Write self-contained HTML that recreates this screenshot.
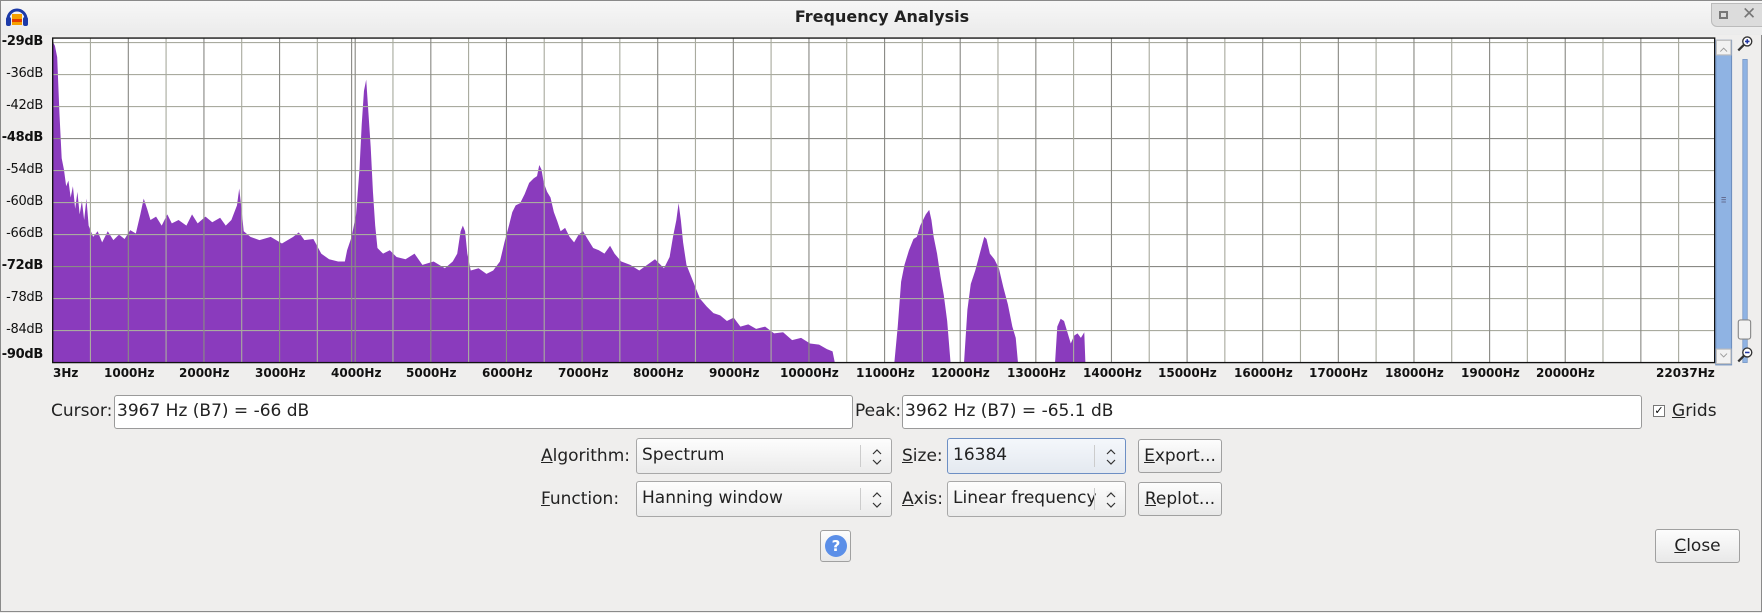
<!DOCTYPE html>
<html><head><meta charset="utf-8"><style>
*{margin:0;padding:0;box-sizing:border-box}
body{width:1762px;height:612px;background:#efeeed;font-family:"DejaVu Sans","Liberation Sans",sans-serif;position:relative;overflow:hidden;border:1px solid #8a8a8a}
.a{position:absolute;white-space:nowrap}
.title{left:0;width:1762px;top:6px;text-align:center;font-weight:bold;font-size:16px;color:#222}
.yl{right:1718px;font-size:13px;color:#111;font-family:"DejaVu Sans",sans-serif;letter-spacing:-0.3px}
.xl{font-size:12px;font-weight:bold;color:#111;top:365px}
.lbl{font-size:17px;color:#222}
.box{background:#fff;border:1px solid #9a9a9a;border-radius:3px;font-size:17px;padding:5px 2px;color:#222}
.cmb{background:linear-gradient(#fdfdfd,#ebebeb);border:1px solid #a8a8a8;border-radius:3px;font-size:17px;padding:6px 5px;color:#222}
.cmb:after{content:"";position:absolute;right:30px;top:6px;bottom:6px;border-left:1px solid #ccc}
.arr{position:absolute;right:9px;top:9px}
.btn{background:linear-gradient(#fdfdfd,#e8e8e8);border:1px solid #a0a0a0;border-radius:3px;font-size:17px;text-align:center;color:#222;padding-top:6px}
u{text-decoration:underline}
</style></head><body>
<div class="a" style="left:0;top:0;width:1762px;height:34px;background:linear-gradient(#f7f7f7,#ebebeb)"></div>
<svg class="a" style="left:4px;top:4px" width="24" height="22" viewBox="0 0 24 22"><path d="M3 14 A9 9 0 0 1 21 14" fill="none" stroke="#1c3aa8" stroke-width="3"/><rect x="1" y="12" width="5" height="9" rx="2" fill="#1c3aa8"/><rect x="18" y="12" width="5" height="9" rx="2" fill="#1c3aa8"/><rect x="7" y="9" width="10" height="11" fill="#f5a000"/><rect x="7" y="14" width="10" height="3" fill="#e23b00"/></svg>
<div class="a title">Frequency Analysis</div>
<div class="a" style="left:1710px;top:2px;width:52px;height:24px;background:#dcdcdc;border-radius:0 0 0 6px;border:1px solid #bbb"></div>
<div class="a" style="left:1718px;top:10px;width:9px;height:8px;border:2px solid #777"></div>
<div class="a" style="left:1741px;top:3px;font-size:17px;color:#777">✕</div>

<svg class="a" style="left:0;top:0" width="1762" height="612" viewBox="0 0 1568 545" preserveAspectRatio="none">
<rect x="46" y="33" width="1479" height="289" fill="#fff"/>
<polygon fill="#8a3bbd" points="46,322 46,36 48,40 50,50 52,100 54,140 56,150 58,165 60,160 62,175 64,165 66,185 68,170 70,190 72,178 74,195 76,176 78,200 82,210 86,205 90,215 95,205 100,213 105,208 110,212 115,204 120,207 124,190 127,176 130,185 133,195 138,192 143,200 148,190 152,198 158,195 165,200 170,190 175,198 182,192 188,197 195,193 200,200 205,195 210,182 212,167 214,185 216,205 222,210 230,213 240,210 250,216 260,210 265,206 270,213 278,212 285,225 292,230 300,232 306,232 308,222 312,210 316,190 319,150 321,110 323,80 325,70 327,100 329,130 331,170 333,200 335,220 340,225 346,222 352,228 360,230 368,225 375,235 385,232 395,238 402,232 406,225 409,205 411,200 413,205 415,225 418,240 425,238 432,243 438,240 444,232 448,215 452,200 455,188 458,182 462,180 466,172 470,162 474,158 477,156 479,146 481,150 483,162 486,170 489,175 492,188 495,196 498,205 502,202 506,210 510,215 514,208 518,205 522,212 527,220 532,222 537,225 542,218 546,225 552,232 560,235 568,240 575,235 582,230 590,238 595,228 598,210 601,195 603,180 605,195 607,215 610,235 614,245 618,255 622,265 628,272 634,278 640,280 646,285 652,282 658,290 665,288 672,292 680,290 688,296 696,295 704,302 712,300 720,305 728,306 735,310 740,312 742,322 795,322 798,290 801,250 804,235 808,222 812,212 815,210 818,200 821,194 823,190 826,186 828,195 830,210 833,225 836,245 839,262 842,285 845,322 857,322 860,275 863,252 867,240 871,225 875,210 877,212 880,225 884,230 888,238 892,255 896,270 900,290 903,300 905,322 938,322 940,290 943,283 946,285 949,295 952,305 955,298 958,296 961,300 964,295 965,322"/>
<g stroke="#a9ab9f" stroke-width="1">
<line x1="46" x2="1525" y1="65.5" y2="65.5"/><line x1="46" x2="1525" y1="94" y2="94"/><line x1="46" x2="1525" y1="151" y2="151"/><line x1="46" x2="1525" y1="179.5" y2="179.5"/><line x1="46" x2="1525" y1="208" y2="208"/><line x1="46" x2="1525" y1="265" y2="265"/><line x1="46" x2="1525" y1="293.5" y2="293.5"/><line x1="46" x2="1525" y1="37" y2="37"/>
</g>
<g stroke="#8a8a85" stroke-width="1"><line x1="46" x2="1525" y1="122.5" y2="122.5"/><line x1="46" x2="1525" y1="236.5" y2="236.5"/></g>
<g stroke="#a9ab9f" stroke-width="1">
<line x1="79.6" x2="79.6" y1="33" y2="322"/><line x1="146.9" x2="146.9" y1="33" y2="322"/><line x1="214.2" x2="214.2" y1="33" y2="322"/><line x1="281.5" x2="281.5" y1="33" y2="322"/><line x1="348.8" x2="348.8" y1="33" y2="322"/><line x1="416.1" x2="416.1" y1="33" y2="322"/><line x1="483.4" x2="483.4" y1="33" y2="322"/><line x1="550.7" x2="550.7" y1="33" y2="322"/><line x1="618" x2="618" y1="33" y2="322"/><line x1="685.3" x2="685.3" y1="33" y2="322"/><line x1="752.6" x2="752.6" y1="33" y2="322"/><line x1="819.9" x2="819.9" y1="33" y2="322"/><line x1="887.2" x2="887.2" y1="33" y2="322"/><line x1="954.5" x2="954.5" y1="33" y2="322"/><line x1="1021.8" x2="1021.8" y1="33" y2="322"/><line x1="1089.1" x2="1089.1" y1="33" y2="322"/><line x1="1156.4" x2="1156.4" y1="33" y2="322"/><line x1="1223.7" x2="1223.7" y1="33" y2="322"/><line x1="1291" x2="1291" y1="33" y2="322"/><line x1="1358.3" x2="1358.3" y1="33" y2="322"/><line x1="1425.6" x2="1425.6" y1="33" y2="322"/><line x1="1492.9" x2="1492.9" y1="33" y2="322"/>
</g>
<g stroke="#8a8a85" stroke-width="1">
<line x1="113.3" x2="113.3" y1="33" y2="322"/><line x1="180.6" x2="180.6" y1="33" y2="322"/><line x1="247.9" x2="247.9" y1="33" y2="322"/><line x1="315.2" x2="315.2" y1="33" y2="322"/><line x1="382.5" x2="382.5" y1="33" y2="322"/><line x1="449.8" x2="449.8" y1="33" y2="322"/><line x1="517.1" x2="517.1" y1="33" y2="322"/><line x1="584.4" x2="584.4" y1="33" y2="322"/><line x1="651.7" x2="651.7" y1="33" y2="322"/><line x1="719" x2="719" y1="33" y2="322"/><line x1="786.3" x2="786.3" y1="33" y2="322"/><line x1="853.6" x2="853.6" y1="33" y2="322"/><line x1="920.9" x2="920.9" y1="33" y2="322"/><line x1="988.2" x2="988.2" y1="33" y2="322"/><line x1="1055.5" x2="1055.5" y1="33" y2="322"/><line x1="1122.8" x2="1122.8" y1="33" y2="322"/><line x1="1190.1" x2="1190.1" y1="33" y2="322"/><line x1="1257.4" x2="1257.4" y1="33" y2="322"/><line x1="1324.7" x2="1324.7" y1="33" y2="322"/><line x1="1392" x2="1392" y1="33" y2="322"/><line x1="1459.3" x2="1459.3" y1="33" y2="322"/>
<line x1="312" x2="312" y1="33" y2="322"/>
</g>
<rect x="46" y="33" width="1479" height="289" fill="none" stroke="#111" stroke-width="1.2"/>
<rect x="1526" y="35" width="14" height="289" fill="#8fb3e3" stroke="#6e8fbf"/>
<rect x="1526.5" y="35" width="13" height="13" fill="#f2f2f2" stroke="#bbb"/>
<rect x="1526.5" y="310" width="13" height="13" fill="#f2f2f2" stroke="#bbb"/>
<path d="M1530 45l3-3 3 3M1530 314l3 3 3-3" fill="none" stroke="#999" stroke-width="0.8"/>
<path d="M1531 175h4M1531 177h4M1531 179h4" stroke="#557" stroke-width="0.6"/>
<rect x="1550" y="52" width="4" height="270" fill="#8fb3e3" stroke="#6e8fbf" stroke-width="0.6"/>
<rect x="1546" y="284" width="11" height="17" rx="2" fill="#f2f2f2" stroke="#888"/>
<circle cx="1554" cy="36" r="4" fill="#fff" stroke="#333" stroke-width="1.2"/><line x1="1551" y1="39" x2="1546" y2="44" stroke="#333" stroke-width="2"/><path d="M1552 36h4M1554 34v4" stroke="#2036a0" stroke-width="1.4"/>
<circle cx="1554" cy="313" r="4" fill="#fff" stroke="#333" stroke-width="1.2"/><line x1="1551" y1="316" x2="1546" y2="321" stroke="#333" stroke-width="2"/><path d="M1552 313h4" stroke="#2036a0" stroke-width="1.4"/>
</svg>

<div class="a yl" style="top:33px;font-weight:bold">-29dB</div>
<div class="a yl" style="top:65px">-36dB</div>
<div class="a yl" style="top:97px">-42dB</div>
<div class="a yl" style="top:129px;font-weight:bold">-48dB</div>
<div class="a yl" style="top:161px">-54dB</div>
<div class="a yl" style="top:193px">-60dB</div>
<div class="a yl" style="top:225px">-66dB</div>
<div class="a yl" style="top:257px;font-weight:bold">-72dB</div>
<div class="a yl" style="top:289px">-78dB</div>
<div class="a yl" style="top:321px">-84dB</div>
<div class="a yl" style="top:346px;font-weight:bold">-90dB</div>

<div class="a xl" style="left:52px">3Hz</div>
<div class="a xl" style="left:103px">1000Hz</div>
<div class="a xl" style="left:178px">2000Hz</div>
<div class="a xl" style="left:254px">3000Hz</div>
<div class="a xl" style="left:330px">4000Hz</div>
<div class="a xl" style="left:405px">5000Hz</div>
<div class="a xl" style="left:481px">6000Hz</div>
<div class="a xl" style="left:557px">7000Hz</div>
<div class="a xl" style="left:632px">8000Hz</div>
<div class="a xl" style="left:708px">9000Hz</div>
<div class="a xl" style="left:779px">10000Hz</div>
<div class="a xl" style="left:855px">11000Hz</div>
<div class="a xl" style="left:930px">12000Hz</div>
<div class="a xl" style="left:1006px">13000Hz</div>
<div class="a xl" style="left:1082px">14000Hz</div>
<div class="a xl" style="left:1157px">15000Hz</div>
<div class="a xl" style="left:1233px">16000Hz</div>
<div class="a xl" style="left:1308px">17000Hz</div>
<div class="a xl" style="left:1384px">18000Hz</div>
<div class="a xl" style="left:1460px">19000Hz</div>
<div class="a xl" style="left:1535px">20000Hz</div>
<div class="a xl" style="left:1655px">22037Hz</div>

<div class="a lbl" style="left:50px;top:400px">Cursor:</div>
<div class="a box" style="left:113px;top:394px;width:739px;height:34px">3967 Hz (B7) = -66 dB</div>
<div class="a lbl" style="left:854px;top:400px">Peak:</div>
<div class="a box" style="left:901px;top:394px;width:740px;height:34px">3962 Hz (B7) = -65.1 dB</div>
<div class="a" style="left:1652px;top:404px;width:12px;height:12px;border:1px solid #777;background:#fff;font-size:11px;line-height:10px;text-align:center">✓</div>
<div class="a lbl" style="left:1671px;top:400px"><u>G</u>rids</div>

<div class="a lbl" style="left:540px;top:445px"><u>A</u>lgorithm:</div>
<div class="a cmb" style="left:635px;top:437px;width:256px;height:36px">Spectrum<svg class="arr" width="10" height="18"><path d="M1 6l4-4 4 4M1 12l4 4 4-4" fill="none" stroke="#333" stroke-width="1.2"/></svg></div>
<div class="a lbl" style="left:901px;top:445px"><u>S</u>ize:</div>
<div class="a cmb" style="left:946px;top:437px;width:179px;height:36px;border-color:#6d8fc4;background:linear-gradient(#f4f7fb,#e4e9f0)">16384<svg class="arr" width="10" height="18"><path d="M1 6l4-4 4 4M1 12l4 4 4-4" fill="none" stroke="#333" stroke-width="1.2"/></svg></div>
<div class="a btn" style="left:1137px;top:438px;width:84px;height:34px"><u>E</u>xport...</div>

<div class="a lbl" style="left:540px;top:488px"><u>F</u>unction:</div>
<div class="a cmb" style="left:635px;top:480px;width:256px;height:36px">Hanning window<svg class="arr" width="10" height="18"><path d="M1 6l4-4 4 4M1 12l4 4 4-4" fill="none" stroke="#333" stroke-width="1.2"/></svg></div>
<div class="a lbl" style="left:901px;top:488px"><u>A</u>xis:</div>
<div class="a cmb" style="left:946px;top:480px;width:179px;height:36px;overflow:hidden">Linear frequency<svg class="arr" width="10" height="18" style="background:#f3f3f3"><path d="M1 6l4-4 4 4M1 12l4 4 4-4" fill="none" stroke="#333" stroke-width="1.2"/></svg></div>
<div class="a btn" style="left:1137px;top:481px;width:84px;height:34px"><u>R</u>eplot...</div>

<div class="a btn" style="left:819px;top:529px;width:31px;height:32px;padding:4px"><div style="width:22px;height:22px;border-radius:50%;background:#5b8fe8;color:#fff;font-weight:bold;font-size:15px;line-height:22px">?</div></div>
<div class="a btn" style="left:1654px;top:528px;width:85px;height:34px"><u>C</u>lose</div>
</body></html>
